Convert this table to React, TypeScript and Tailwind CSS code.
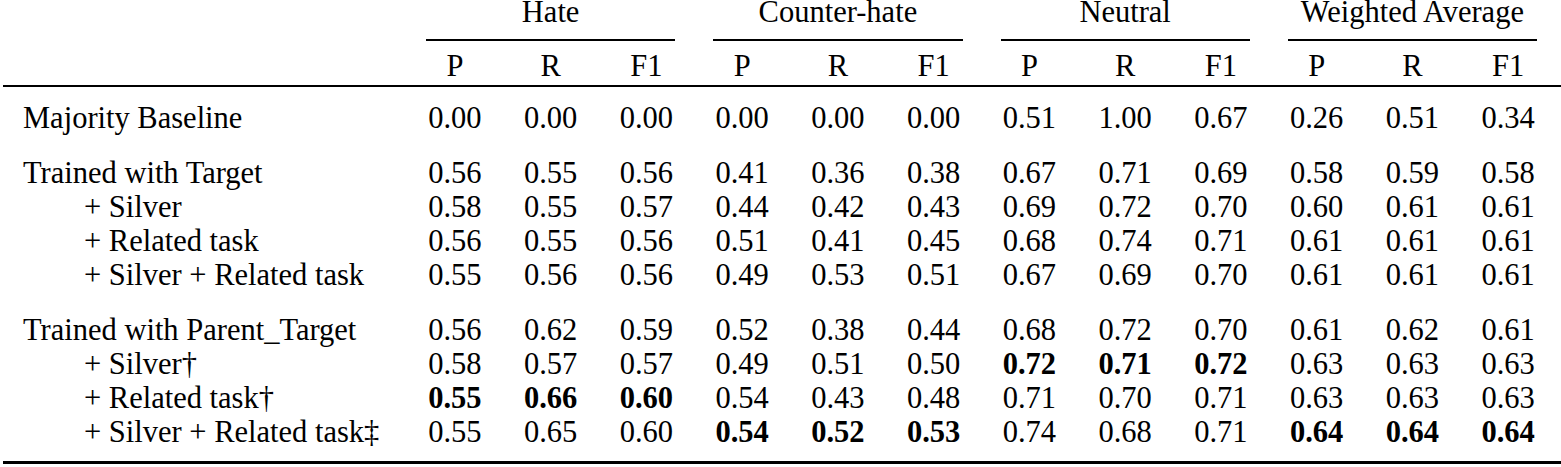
import { Fragment } from "react";

type Cell = { v: string; b?: boolean };

interface Row {
  label: string;
  indent?: boolean;
  gapBefore?: boolean;
  cells: Cell[];
}

const groups = ["Hate", "Counter-hate", "Neutral", "Weighted Average"];
const metrics = ["P", "R", "F1"];

// plain values; "*" prefix = bold
const mk = (s: string): Cell[] =>
  s.split(" ").map((x) => (x.startsWith("*") ? { v: x.slice(1), b: true } : { v: x }));

const rows: Row[] = [
  { label: "Majority Baseline", cells: mk("0.00 0.00 0.00 0.00 0.00 0.00 0.51 1.00 0.67 0.26 0.51 0.34") },
  { label: "Trained with Target", gapBefore: true, cells: mk("0.56 0.55 0.56 0.41 0.36 0.38 0.67 0.71 0.69 0.58 0.59 0.58") },
  { label: "+ Silver", indent: true, cells: mk("0.58 0.55 0.57 0.44 0.42 0.43 0.69 0.72 0.70 0.60 0.61 0.61") },
  { label: "+ Related task", indent: true, cells: mk("0.56 0.55 0.56 0.51 0.41 0.45 0.68 0.74 0.71 0.61 0.61 0.61") },
  { label: "+ Silver + Related task", indent: true, cells: mk("0.55 0.56 0.56 0.49 0.53 0.51 0.67 0.69 0.70 0.61 0.61 0.61") },
  { label: "Trained with Parent_Target", gapBefore: true, cells: mk("0.56 0.62 0.59 0.52 0.38 0.44 0.68 0.72 0.70 0.61 0.62 0.61") },
  { label: "+ Silver†", indent: true, cells: mk("0.58 0.57 0.57 0.49 0.51 0.50 *0.72 *0.71 *0.72 0.63 0.63 0.63") },
  { label: "+ Related task†", indent: true, cells: mk("*0.55 *0.66 *0.60 0.54 0.43 0.48 0.71 0.70 0.71 0.63 0.63 0.63") },
  { label: "+ Silver + Related task‡", indent: true, cells: mk("0.55 0.65 0.60 *0.54 *0.52 *0.53 0.74 0.68 0.71 *0.64 *0.64 *0.64") },
];

const grid = "grid grid-cols-[404px_repeat(12,95.75px)]";

export default function App() {
  return (
    <div className="w-[1561px] h-[467px] overflow-hidden bg-white text-black font-serif text-[30.5px]">
      <div className="ml-[3px] w-[1558px] font-['Liberation_Serif']">
        {/* group headers */}
        <div className={`${grid} h-[25px] leading-[25px]`}>
          <div />
          {groups.map((g) => (
            <div key={g} className="col-span-3 text-center whitespace-nowrap">
              {g}
            </div>
          ))}
        </div>

        {/* cmidrules */}
        <div className={`${grid} mt-[14px]`}>
          <div />
          {groups.map((g) => (
            <div key={g} className="col-span-3 mx-[19px] h-[1.5px] bg-black" />
          ))}
        </div>

        {/* metric headers */}
        <div className={`${grid} mt-[7.5px] h-[36px] leading-[36px]`}>
          <div />
          {groups.map((g) => (
            <Fragment key={g}>
              {metrics.map((m) => (
                <div key={m} className="text-center">
                  {m}
                </div>
              ))}
            </Fragment>
          ))}
        </div>

        <div className="mt-[1px] h-[1.5px] bg-black" />

        {/* body */}
        <div className="mt-[14.5px] flex flex-col">
          {rows.map((r) => (
            <div
              key={r.label}
              className={`${grid} h-[34px] leading-[34px] ${r.gapBefore ? "mt-[21px]" : ""}`}
            >
              <div className={`whitespace-nowrap ${r.indent ? "pl-[81px]" : "pl-[20px]"}`}>
                {r.label}
              </div>
              {r.cells.map((c, i) => (
                <div key={i} className={`text-center ${c.b ? "font-bold" : ""}`}>
                  {c.v}
                </div>
              ))}
            </div>
          ))}
        </div>

        <div className="mt-[12px] h-[3px] bg-black" />
      </div>
    </div>
  );
}
